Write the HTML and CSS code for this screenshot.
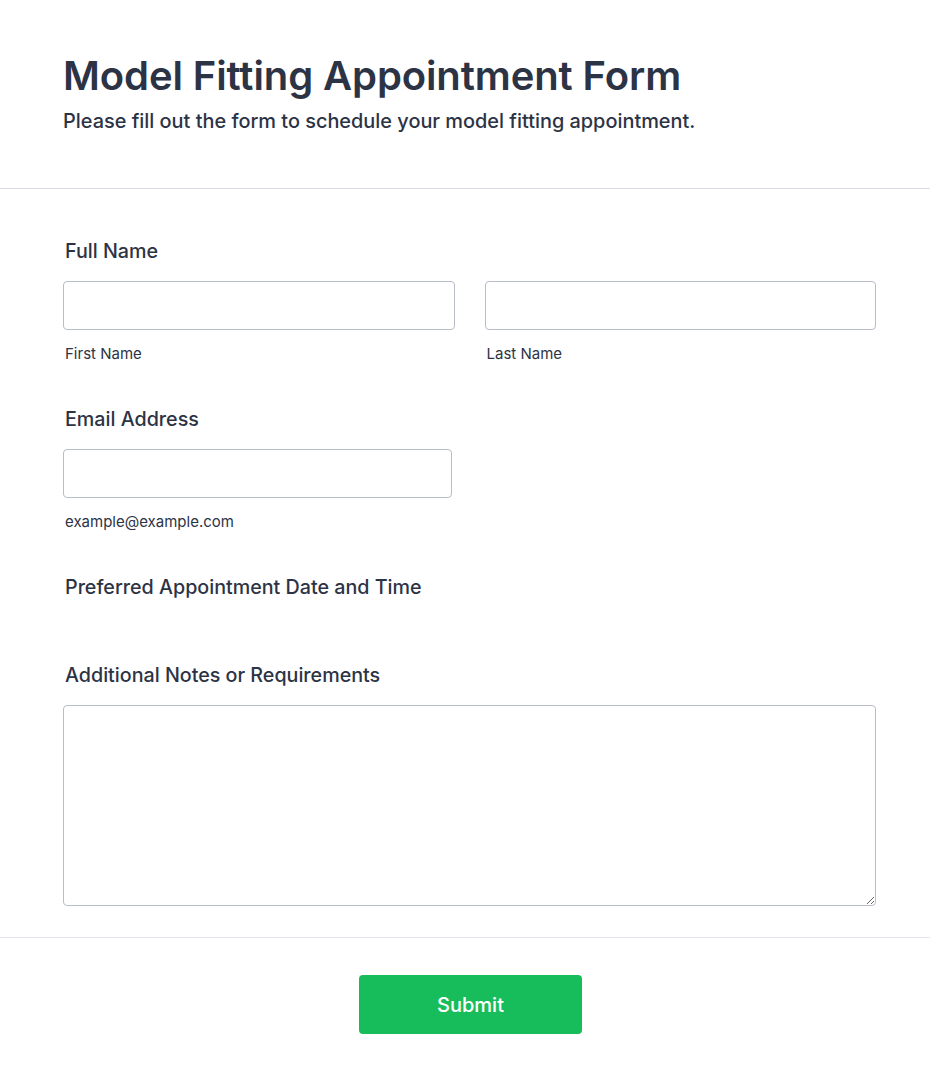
FILE: index.html
```html
<!DOCTYPE html>
<html>
<head>
<meta charset="utf-8">
<link rel="stylesheet" href="styles.css">
</head>
<body>
<header class="header">
  <h1 class="title">Model Fitting Appointment Form</h1>
  <p class="subtitle">Please fill out the form to schedule your model fitting appointment.</p>
</header>
<form class="form">
  <div class="field">
    <label class="label">Full Name</label>
    <div class="name-row">
      <div class="sub">
        <input class="input" type="text">
        <span class="hint">First Name</span>
      </div>
      <div class="sub">
        <input class="input" type="text">
        <span class="hint">Last Name</span>
      </div>
    </div>
  </div>
  <div class="field">
    <label class="label">Email Address</label>
    <div class="sub email">
      <input class="input" type="email">
      <span class="hint">example@example.com</span>
    </div>
  </div>
  <div class="field field-empty">
    <label class="label">Preferred Appointment Date and Time</label>
  </div>
  <div class="field">
    <label class="label">Additional Notes or Requirements</label>
    <textarea class="textarea"></textarea>
  </div>
</form>
<footer class="footer">
  <button class="submit" type="button">Submit</button>
</footer>
</body>
</html>
```
FILE: styles.css
```css
* { box-sizing: border-box; }
body {
  margin: 0;
  background: #fff;
  font-family: Inter, "Noto Sans", sans-serif;
  color: #2c3345;
}
.header {
  padding: 52px 63px 0;
  height: 189px;
  border-bottom: 1px solid #d9dce5;
}
.title {
  margin: 0;
  font-size: 40px;
  font-weight: 600;
  line-height: 48px;
  letter-spacing: -0.1px;
}
.subtitle {
  margin: 9px 0 0;
  font-size: 19.9px;
  font-weight: 500;
  line-height: 24px;
}
.form {
  padding: 50px 54px 31px 63px;
  border-bottom: 1px solid #e4e6ec;
}
.field { margin-bottom: 44px; }
.field:last-child { margin-bottom: 0; }
.field-empty { margin-bottom: 64px; }
.label {
  display: block;
  font-size: 19.7px;
  font-weight: 500;
  line-height: 24px;
  padding-left: 2px;
  margin-bottom: 18px;
}
.name-row {
  display: grid;
  grid-template-columns: 1fr 1fr;
  column-gap: 30px;
}
.sub { display: flex; flex-direction: column; }
.email { width: 389px; }
.input {
  height: 49px;
  width: 100%;
  border: 1px solid #b8bdc9;
  border-radius: 4px;
  background: #fff;
  font: inherit;
}
.hint {
  margin-top: 15px;
  padding-left: 2px;
  font-size: 15px;
  line-height: 18px;
  color: #2c3345;
}
.textarea {
  display: block;
  width: 100%;
  height: 201px;
  border: 1px solid #b8bdc9;
  border-radius: 4px;
  font: inherit;
  resize: vertical;
}
.footer {
  display: flex;
  justify-content: center;
  padding: 37px 0 50px;
}
.submit {
  width: 223px;
  height: 59px;
  margin-left: 11px;
  border: none;
  border-radius: 4px;
  background: #18bd5b;
  color: #fff;
  font-family: Inter, sans-serif;
  font-size: 20px;
  font-weight: 500;
}
```
